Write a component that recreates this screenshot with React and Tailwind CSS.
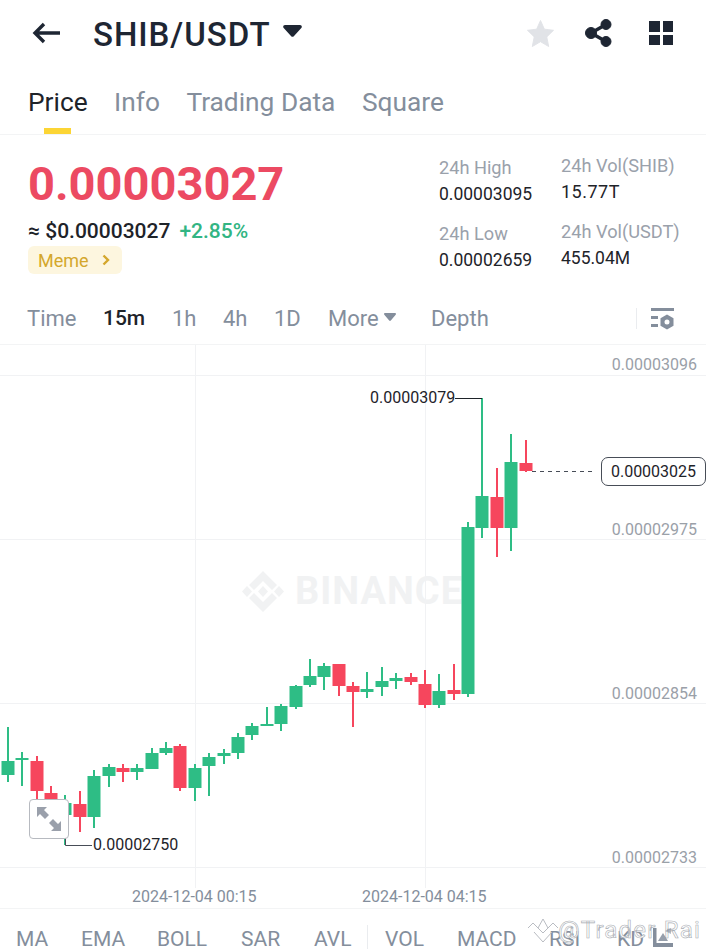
const font = { fontFamily: "Roboto, sans-serif" };

// x, wick top, wick bottom, body top, body bottom, up?
const candles = [
  [8, 727, 782, 761, 775, 1],
  [22, 752, 786, 758, 760, 1],
  [37, 756, 800, 761, 791, 0],
  [51, 786, 815, 793, 806, 0],
  [65, 795, 845, 803, 815, 1],
  [80, 791, 832, 804, 817, 0],
  [94, 770, 828, 776, 817, 1],
  [109, 764, 787, 767, 776, 1],
  [123, 764, 782, 768, 772, 0],
  [137, 764, 780, 768, 772, 1],
  [152, 748, 769, 753, 769, 1],
  [166, 742, 755, 748, 753, 1],
  [180, 744, 791, 746, 788, 0],
  [195, 764, 801, 768, 788, 1],
  [209, 753, 796, 757, 766, 1],
  [224, 749, 764, 753, 756, 1],
  [238, 733, 759, 737, 753, 1],
  [252, 723, 740, 726, 735, 1],
  [267, 707, 726, 724, 726, 1],
  [281, 704, 731, 706, 724, 1],
  [296, 685, 709, 686, 707, 1],
  [310, 659, 687, 676, 685, 1],
  [324, 663, 690, 666, 677, 1],
  [339, 664, 696, 664, 686, 0],
  [353, 682, 727, 686, 692, 0],
  [367, 672, 698, 689, 692, 1],
  [382, 667, 696, 681, 687, 1],
  [396, 673, 689, 678, 681, 1],
  [411, 673, 685, 677, 682, 0],
  [425, 670, 708, 684, 705, 0],
  [439, 674, 708, 691, 705, 1],
  [454, 664, 700, 690, 694, 0],
  [468, 522, 697, 527, 694, 1],
  [482, 398, 538, 496, 528, 1],
  [497, 468, 557, 497, 528, 0],
  [511, 434, 551, 462, 528, 1],
  [526, 440, 472, 463, 471, 0],
];

const tabs = ["Info", "Trading Data", "Square"];
const axisLabels = [
  ["0.00003096", "top-[10px]"],
  ["0.00002975", "top-[175px]"],
  ["0.00002854", "top-[339px]"],
  ["0.00002733", "top-[503px]"],
];
const indicadores = [
  ["MA", "w-[31px] ml-[16px]"],
  ["EMA", "w-[43px] ml-[34px]"],
  ["BOLL", "w-[51px] ml-[33px]"],
  ["SAR", "w-[47px] ml-[33px]"],
  ["AVL", "w-[37px] ml-[26px]"],
  ["VOL", "w-[38px] ml-[34px]"],
  ["MACD", "w-[58px] ml-[34px]"],
  ["RSI", "w-[34px] ml-[34px]"],
  ["KD", "w-[33px] ml-[34px]"],
];

function Stat({ label, value, className, valueClass }) {
  return (
    <div className={className}>
      <p className="text-[18.2px] leading-[24px] text-[#9aa1ab] whitespace-nowrap">{label}</p>
      <p className={`leading-[24px] mt-[2px] text-[#1e2329] whitespace-nowrap ${valueClass}`}>{value}</p>
    </div>
  );
}

function Chart() {
  return (
    <svg className="absolute left-0 top-0" width="706" height="563" viewBox="0 345 706 563">
      {[375, 539, 703, 867].map((y) => (
        <line key={y} x1="0" x2="706" y1={y + 0.5} y2={y + 0.5} stroke="#f1f2f4" />
      ))}
      {[195, 425].map((x) => (
        <line key={x} x1={x + 0.5} x2={x + 0.5} y1="345" y2="888" stroke="#f1f2f4" />
      ))}
      <g fill="#f1f2f3">
        <polygon points="263,571 277,585 272,590 263,581 254,590 249,585" />
        <polygon points="263,612 277,598 272,593 263,602 254,593 249,598" />
        <polygon points="263,586 268,591.5 263,597 258,591.5" />
        <polygon points="247,586 252,591.5 247,597 242,591.5" />
        <polygon points="279,586 284,591.5 279,597 274,591.5" />
      </g>
      {candles.map(([x, top, bottom, bodyTop, bodyBottom, up]) => {
        const cor = up ? "#2ebd85" : "#f6465d";
        return (
          <g key={x}>
            <rect x={x - 1} y={top} width="2" height={bottom - top} fill={cor} />
            <rect x={x - 6.5} y={bodyTop} width="13" height={bodyBottom - bodyTop} fill={cor} />
          </g>
        );
      })}
      <path d="M455 398.5H482" stroke="#1e2329" fill="none" />
      <path d="M65.5 838V845.5H92" stroke="#474d57" fill="none" />
      <line x1="532" x2="596" y1="471.5" y2="471.5" stroke="#474d57" strokeDasharray="4 4" />
    </svg>
  );
}

export default function App() {
  return (
    <div className="w-full h-[950px] overflow-hidden bg-white relative" style={font}>
      {/* topo */}
      <div className="flex items-center h-[66px] pl-[32px]">
        <svg width="28" height="22" viewBox="0 0 28 22" fill="none" stroke="#1e2633" strokeWidth="3.4">
          <path d="M28 11H3M12 2L3 11L12 20" />
        </svg>
        <span className="ml-[33px] mt-[3px] text-[33px] font-medium text-[#1e2633] tracking-[0.95px]">SHIB/USDT</span>
        <svg className="ml-[13px] mb-[5px]" width="19" height="12" viewBox="0 0 19 12" fill="#1e2633">
          <path d="M2 0H17C18.6 0 19.4 1.8 18.3 3L10.8 11.2C10 12 9 12 8.2 11.2L.7 3C-.4 1.8.4 0 2 0Z" />
        </svg>
        <svg className="ml-[225px]" width="27" height="27" viewBox="0 0 28 27" fill="#e1e3e7">
          <path d="M14 0L18 9L27.5 10.2L20.5 17L22.5 27L14 22L5.5 27L7.5 17L.5 10.2L10 9Z" stroke="#e1e3e7" strokeLinejoin="round" />
        </svg>
        <svg className="ml-[31px]" width="28" height="28" viewBox="0 0 28 28" fill="#1e2633" stroke="#1e2633">
          <circle cx="6" cy="14" r="5.5" />
          <circle cx="21" cy="5.5" r="5" />
          <circle cx="21" cy="22.5" r="5" />
          <path d="M6 14L21 5.5M6 14L21 22.5" strokeWidth="3.5" />
        </svg>
        <div className="ml-[36px] grid grid-cols-2 gap-[3px] w-[24px]">
          <div className="h-[10.5px] bg-[#1e2633]" />
          <div className="h-[10.5px] bg-[#1e2633]" />
          <div className="h-[10.5px] bg-[#1e2633]" />
          <div className="h-[10.5px] bg-[#1e2633]" />
        </div>
      </div>

      {/* abas */}
      <div className="flex h-[69px] pl-[28px] gap-[26.5px] border-b border-[#f3f4f5] text-[26.3px]">
        <div className="flex flex-col items-center">
          <span className="leading-[72px] h-[62px] text-[#1e2329]">Price</span>
          <div className="w-[27px] h-[6px] bg-[#fcd535]" />
        </div>
        {tabs.map((t) => (
          <span key={t} className="leading-[72px] h-[62px] text-[#848e9c]">{t}</span>
        ))}
      </div>

      {/* preco e stats */}
      <div className="flex h-[165px]">
        <div className="w-[439px] pl-[28px]">
          <p className="text-[47px] font-bold leading-[56px] mt-[21px] text-[#ec4a62]">0.00003027</p>
          <div className="flex items-center mt-[6px] h-[28px] text-[21px] font-medium">
            <span className="text-[#1e2329]">≈ $0.00003027</span>
            <span className="ml-[9px] text-[#32b583]">+2.85%</span>
          </div>
          <div className="flex items-center w-[94px] h-[28px] mt-[0px] pl-[10px] rounded-[6px] bg-[#fdf6df]">
            <span className="text-[18px] text-[#d4a72c]">Meme</span>
            <svg className="ml-[13px]" width="8" height="12" viewBox="0 0 8 12" fill="none" stroke="#d4a72c" strokeWidth="2.4">
              <path d="M1.5 1.5L6 6L1.5 10.5" />
            </svg>
          </div>
        </div>
        <div className="w-[122px] pt-[21px]">
          <Stat label="24h High" value="0.00003095" valueClass="text-[17.5px]" />
          <Stat label="24h Low" value="0.00002659" valueClass="text-[17.5px]" className="mt-[16px]" />
        </div>
        <div className="pt-[19px]">
          <Stat label="24h Vol(SHIB)" value="15.77T" valueClass="text-[18px] tracking-[0.5px]" />
          <Stat label="24h Vol(USDT)" value="455.04M" valueClass="text-[17.5px]" className="mt-[16px]" />
        </div>
      </div>

      {/* intervalos */}
      <div className="flex items-center h-[45px] text-[22px] text-[#848e9c] border-b border-[#f3f4f5] pb-[7px]">
        <span className="ml-[27px] w-[48px]">Time</span>
        <span className="ml-[28px] w-[41px] text-[21px] font-medium text-[#1e2329]">15m</span>
        <span className="ml-[28px] w-[23px]">1h</span>
        <span className="ml-[28px] w-[23px]">4h</span>
        <span className="ml-[28px] w-[25px]">1D</span>
        <span className="ml-[29px] w-[48px]">More</span>
        <svg className="ml-[8px] mb-[4px]" width="12" height="8" viewBox="0 0 12 8" fill="#848e9c">
          <path d="M1 0H11C12 0 12.3 1 11.7 1.7L6.8 7.6C6.4 8 5.6 8 5.2 7.6L.3 1.7C-.3 1 0 0 1 0Z" />
        </svg>
        <span className="ml-[35px] w-[58px]">Depth</span>
        <div className="ml-[147px] w-px h-[21px] bg-[#eaecef]" />
        <svg className="ml-[14px]" width="24" height="22" viewBox="0 0 24 22" fill="#848e9c">
          <rect x="0" y="0" width="23" height="3" />
          <rect x="0" y="8" width="7" height="3" />
          <rect x="0" y="16" width="7" height="3" />
          <path d="M16 6.5L22.5 10.2V17.8L16 21.5L9.5 17.8V10.2ZM16 11.5A2.5 2.5 0 1 0 16 16.5A2.5 2.5 0 1 0 16 11.5Z" fillRule="evenodd" />
        </svg>
      </div>

      {/* grafico */}
      <div className="relative h-[563px]">
        <span className="absolute left-[295px] top-[224px] text-[38px] font-bold tracking-[1px] leading-[44px] text-[#f1f2f3]">BINANCE</span>
        <Chart />
        {axisLabels.map(([t, pos]) => (
          <span key={t} className={`absolute right-[9px] text-[16px] leading-[20px] text-[#9aa0a8] ${pos}`}>{t}</span>
        ))}
        <span className="absolute left-[370px] top-[43px] text-[16px] leading-[20px] text-[#1e2329]">0.00003079</span>
        <span className="absolute left-[93px] top-[490px] text-[16px] leading-[20px] text-[#1e2329]">0.00002750</span>
        <span className="absolute left-[601px] top-[112px] w-[105px] h-[29px] flex items-center justify-center rounded-[7px] border border-[#474d57] bg-white text-[16px] text-[#1e2329]">0.00003025</span>
        <div className="absolute left-[29px] top-[454px] w-[40px] h-[40px] flex items-center justify-center rounded-[4px] border border-[#b7bac0] bg-white">
          <svg width="24" height="24" viewBox="0 0 24 24" fill="#9aa0ab">
            <path d="M0 0H10L7 3L12 8L8 12L3 7L0 10Z" />
            <path d="M24 24H14L17 21L12 16L16 12L21 17L24 14Z" />
          </svg>
        </div>
        <span className="absolute left-[132px] top-[543px] text-[16px] leading-[18px] text-[#848e9c] whitespace-nowrap">2024-12-04 00:15</span>
        <span className="absolute left-[362px] top-[543px] text-[16px] leading-[18px] text-[#848e9c] whitespace-nowrap">2024-12-04 04:15</span>
      </div>

      {/* indicadores */}
      <div className="flex items-center h-[42px] border-t border-[#f3f4f5] pt-[20px] text-[21px] text-[#848e9c] relative">
        {indicadores.map(([t, cls]) => (
          <span key={t} className={`whitespace-nowrap ${cls}`}>{t}</span>
        ))}
        <div className="absolute left-[367px] top-[16px] w-px h-[24px] bg-[#eaecef]" />
      </div>

      {/* marca d'agua por cima */}
      <svg className="absolute left-[527px] top-[918px]" width="32" height="26" viewBox="0 0 32 26" fill="none" stroke="#b9bcc2" strokeWidth="1">
        <path d="M1 10L6 5L11 10L16 1L21 10L26 5L31 10" />
        <path d="M7 14L16 24L25 14" />
        <path d="M11 10L16 15L21 10" />
      </svg>
      <span className="absolute left-[558px] top-[914px] text-[24px] leading-[32px] tracking-[1.2px] text-white [-webkit-text-stroke:0.6px_#a9adb3] whitespace-nowrap">@Trader Rai</span>
      <svg className="absolute left-[653px] top-[928px]" width="20" height="19" viewBox="0 0 20 19" fill="#848e9c">
        <path d="M0 0H3.5V15H20V19H0Z" />
        <path d="M5 13L10 5L15 13Z" fillOpacity="0.85" />
        <path d="M12 3L18 0V6Z" fillOpacity="0.6" />
      </svg>
    </div>
  );
}
